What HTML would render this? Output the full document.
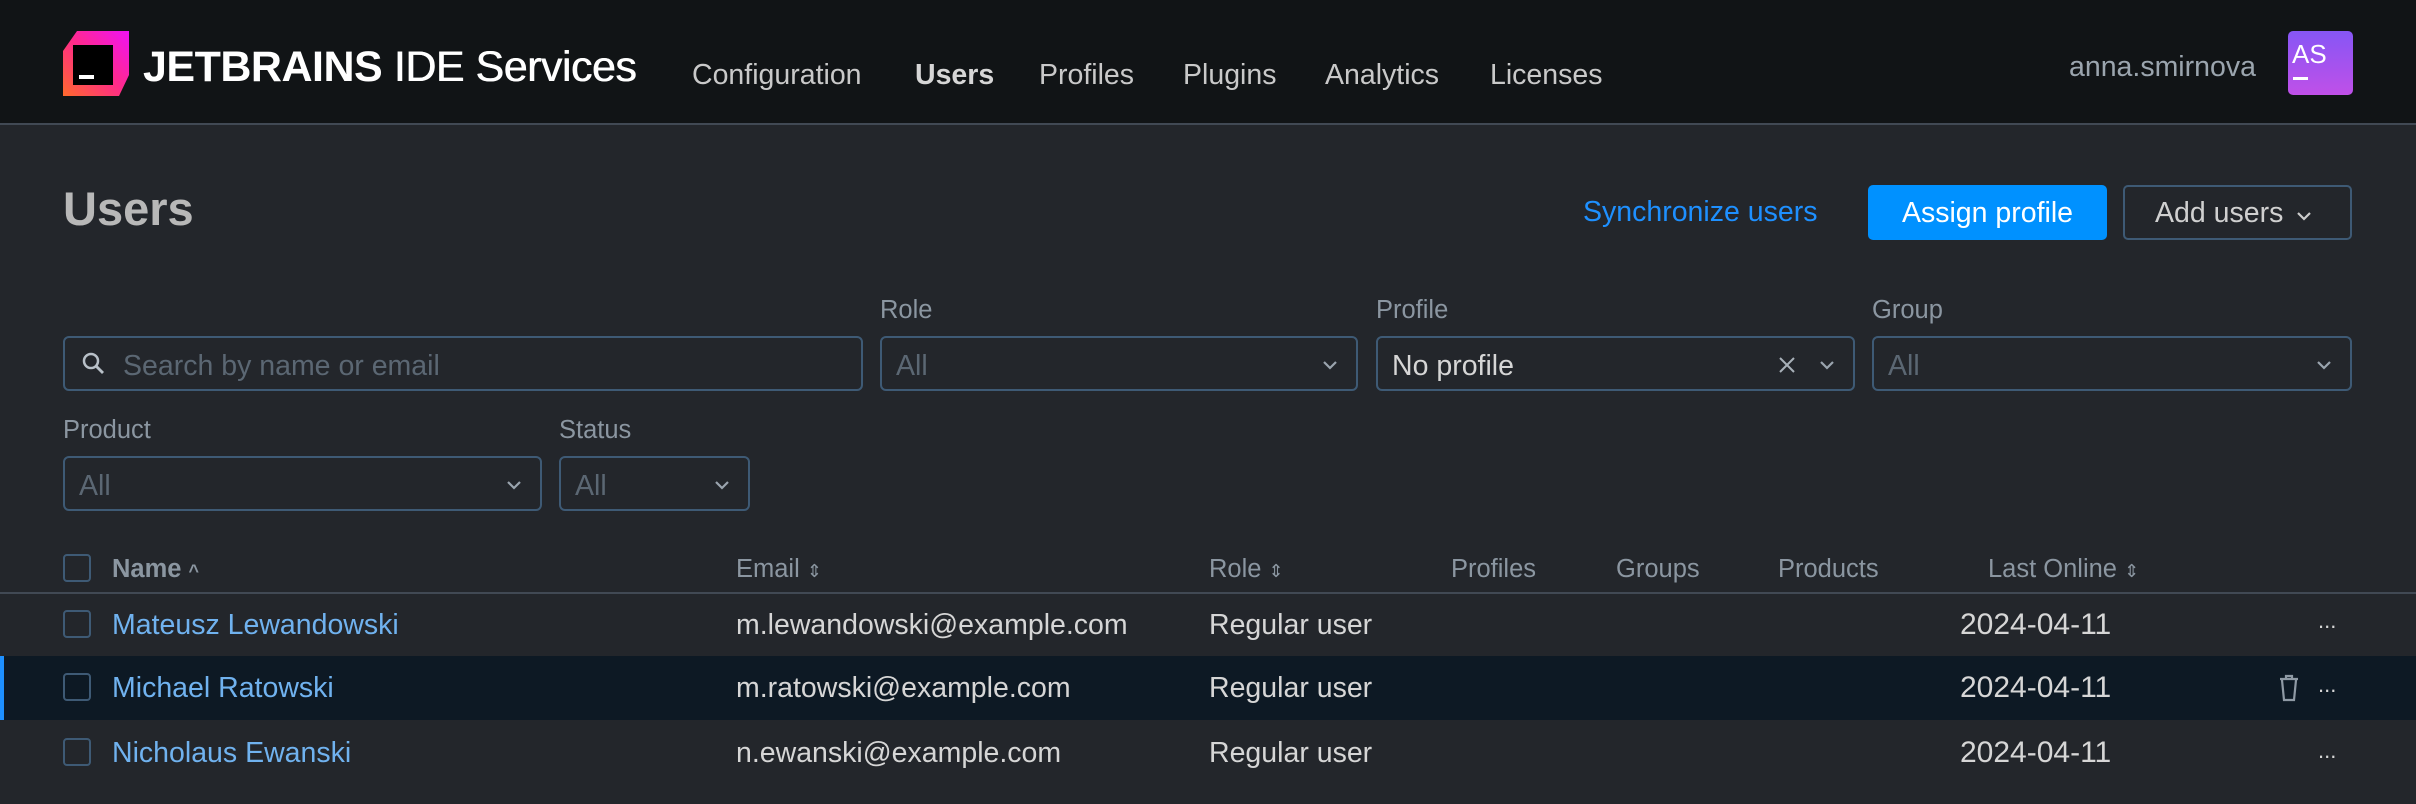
<!DOCTYPE html>
<html><head><meta charset="utf-8"><style>
*{box-sizing:border-box;margin:0;padding:0}
body{width:2416px;height:804px;background:#23262b;font-family:"Liberation Sans",sans-serif;position:relative;overflow:hidden;color:#d6d6d6}
.a{position:absolute;white-space:nowrap}
.hdr{position:absolute;left:0;top:0;width:2416px;height:125px;background:#111416;border-bottom:2px solid #414954}
.nav{font-size:28.5px;color:#c9c9c9;top:59px}
.lbl{font-size:25.5px;color:#8b96a1}
.box{position:absolute;border:2px solid #3e5a75;border-radius:6px;height:55px}
.ph{font-size:28.5px;color:#5b6773;position:absolute;top:12px;left:14px}
.chev{position:absolute;top:17px;width:20px;height:20px}
.th{font-size:25.5px;color:#8b96a1;top:555px}
.cb{position:absolute;left:63px;width:28px;height:28px;border:2px solid #3e5a75;border-radius:4px}
.td{font-size:28.5px;color:#d6d6d6}
.nm{font-size:28.5px;color:#70b2ef}
.dt{font-size:30px;color:#d6d6d6}
</style></head><body>
<div class="hdr"></div>
<svg class="a" style="left:63px;top:31px" width="66" height="65" viewBox="0 0 66 65">
<defs><linearGradient id="g" x1="0" y1="1" x2="1" y2="0"><stop offset="0" stop-color="#ff6a2b"/><stop offset=".5" stop-color="#ff2a8a"/><stop offset="1" stop-color="#f012f5"/></linearGradient></defs>
<path d="M14 0H66V44L56 65H0V20Z" fill="url(#g)"/>
<rect x="10" y="14" width="40" height="40" fill="#000"/>
<rect x="16" y="44" width="15" height="4" fill="#fff"/>
</svg>
<div class="a" style="left:143px;top:43px;font-size:43px;font-weight:bold;color:#fff;letter-spacing:-0.5px">JETBRAINS <span style="font-weight:normal;text-shadow:0.6px 0 0 #fff">IDE Services</span></div>
<div class="a nav" style="left:692px">Configuration</div>
<div class="a nav" style="left:915px;font-weight:bold;color:#d6d6d6">Users</div>
<div class="a nav" style="left:1039px">Profiles</div>
<div class="a nav" style="left:1183px">Plugins</div>
<div class="a nav" style="left:1325px">Analytics</div>
<div class="a nav" style="left:1490px">Licenses</div>
<div class="a" style="left:2069px;top:51px;font-size:28.5px;color:#9ba5ae">anna.smirnova</div>
<div class="a" style="left:2288px;top:31px;width:65px;height:64px;border-radius:5px;background:linear-gradient(#8656f5,#c050e8)"><span class="a" style="left:4px;top:8px;font-size:26px;color:#fff">AS</span><span class="a" style="left:5px;top:46px;width:15px;height:3px;background:#fff"></span></div>

<div class="a" style="left:63px;top:181px;font-size:47px;font-weight:bold;color:#b8b8b8">Users</div>
<div class="a" style="left:1583px;top:196px;font-size:28.5px;color:#1e90ff">Synchronize users</div>
<div class="a" style="left:1868px;top:185px;width:239px;height:55px;background:#0091ff;border-radius:5px;font-size:28.5px;color:#fff;text-align:center;line-height:57px">Assign profile</div>
<div class="a" style="left:2123px;top:185px;width:229px;height:55px;border:2px solid #3e5a75;border-radius:5px;font-size:28.5px;color:#d0d0d0;line-height:53px;padding-left:30px">Add users <svg width="18" height="12" viewBox="0 0 18 12" style="margin-left:4px"><path d="M3 3L9 9L15 3" stroke="#ccc" stroke-width="2.2" fill="none"/></svg></div>

<div class="a lbl" style="left:880px;top:296px">Role</div>
<div class="a lbl" style="left:1376px;top:296px">Profile</div>
<div class="a lbl" style="left:1872px;top:296px">Group</div>

<div class="box" style="left:63px;top:336px;width:800px"><svg class="a" style="left:16px;top:13px" width="26" height="26" viewBox="0 0 26 26"><circle cx="10" cy="10" r="7" stroke="#b8c0c8" stroke-width="2.5" fill="none"/><path d="M15 15L22 22" stroke="#b8c0c8" stroke-width="2.8"/></svg><span class="ph" style="left:58px">Search by name or email</span></div>
<div class="box" style="left:880px;top:336px;width:478px"><span class="ph">All</span><svg class="chev" style="right:16px" viewBox="0 0 20 20"><path d="M4 7L10 13L16 7" stroke="#9aa4ae" stroke-width="2.2" fill="none"/></svg></div>
<div class="box" style="left:1376px;top:336px;width:479px"><span class="ph" style="color:#d6d6d6">No profile</span><svg class="chev" style="right:56px" viewBox="0 0 20 20"><path d="M3 3L17 17M17 3L3 17" stroke="#a8b0b8" stroke-width="2" fill="none"/></svg><svg class="chev" style="right:16px" viewBox="0 0 20 20"><path d="M4 7L10 13L16 7" stroke="#9aa4ae" stroke-width="2.2" fill="none"/></svg></div>
<div class="box" style="left:1872px;top:336px;width:480px"><span class="ph">All</span><svg class="chev" style="right:16px" viewBox="0 0 20 20"><path d="M4 7L10 13L16 7" stroke="#9aa4ae" stroke-width="2.2" fill="none"/></svg></div>

<div class="a lbl" style="left:63px;top:416px">Product</div>
<div class="a lbl" style="left:559px;top:416px">Status</div>
<div class="box" style="left:63px;top:456px;width:479px"><span class="ph">All</span><svg class="chev" style="right:16px" viewBox="0 0 20 20"><path d="M4 7L10 13L16 7" stroke="#9aa4ae" stroke-width="2.2" fill="none"/></svg></div>
<div class="box" style="left:559px;top:456px;width:191px"><span class="ph">All</span><svg class="chev" style="right:16px" viewBox="0 0 20 20"><path d="M4 7L10 13L16 7" stroke="#9aa4ae" stroke-width="2.2" fill="none"/></svg></div>

<div class="cb" style="top:554px"></div>
<div class="a th" style="left:112px;font-weight:bold">Name <span style="font-size:18px">^</span></div>
<div class="a th" style="left:736px">Email <span style="font-size:18px">⇕</span></div>
<div class="a th" style="left:1209px">Role <span style="font-size:18px">⇕</span></div>
<div class="a th" style="left:1451px">Profiles</div>
<div class="a th" style="left:1616px">Groups</div>
<div class="a th" style="left:1778px">Products</div>
<div class="a th" style="left:1988px">Last Online <span style="font-size:18px">⇕</span></div>
<div class="a" style="left:0;top:592px;width:2416px;height:2px;background:#414954"></div>

<div class="a" style="left:0;top:656px;width:2416px;height:64px;background:#0d1924"></div>
<div class="a" style="left:0;top:656px;width:4px;height:64px;background:#1e90ff"></div>

<div class="cb" style="top:610px"></div>
<div class="a nm" style="left:112px;top:609px">Mateusz Lewandowski</div>
<div class="a td" style="left:736px;top:609px">m.lewandowski@example.com</div>
<div class="a td" style="left:1209px;top:609px">Regular user</div>
<div class="a dt" style="left:1960px;top:608px">2024-04-11</div>
<div class="a td" style="left:2318px;top:608px;font-size:22px">...</div>

<div class="cb" style="top:673px"></div>
<div class="a nm" style="left:112px;top:672px">Michael Ratowski</div>
<div class="a td" style="left:736px;top:672px">m.ratowski@example.com</div>
<div class="a td" style="left:1209px;top:672px">Regular user</div>
<div class="a dt" style="left:1960px;top:671px">2024-04-11</div>
<svg class="a" style="left:2276px;top:673px" width="26" height="30" viewBox="0 0 26 30"><path d="M4 6H22M10 6V3H16V6M6 7L8 27H18L20 7" stroke="#8f9aa5" stroke-width="2.2" fill="none"/></svg>
<div class="a td" style="left:2318px;top:672px;font-size:22px">...</div>

<div class="cb" style="top:738px"></div>
<div class="a nm" style="left:112px;top:737px">Nicholaus Ewanski</div>
<div class="a td" style="left:736px;top:737px">n.ewanski@example.com</div>
<div class="a td" style="left:1209px;top:737px">Regular user</div>
<div class="a dt" style="left:1960px;top:736px">2024-04-11</div>
<div class="a td" style="left:2318px;top:738px;font-size:22px">...</div>
</body></html>
